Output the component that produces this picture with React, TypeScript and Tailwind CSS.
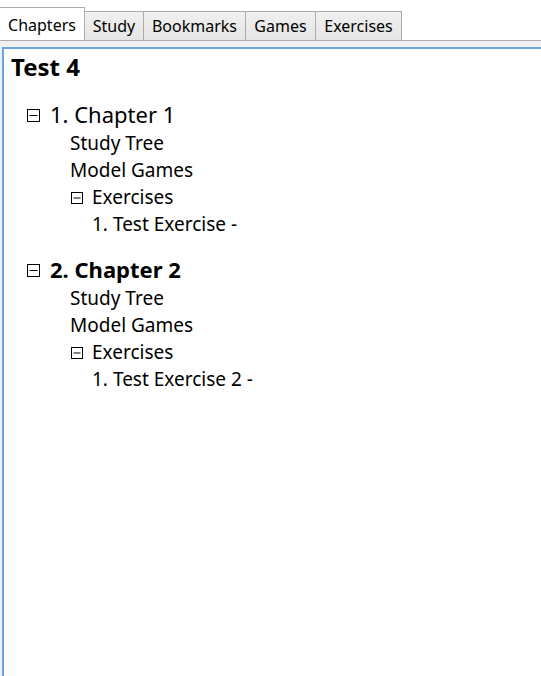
const tabs = [
  { label: 'Chapters', width: 'w-[85px]', selected: true },
  { label: 'Study', width: 'w-[59px]', selected: false },
  { label: 'Bookmarks', width: 'w-[102px]', selected: false },
  { label: 'Games', width: 'w-[70px]', selected: false },
  { label: 'Exercises', width: 'w-[86px]', selected: false },
];

const chapters = [
  { title: '1. Chapter 1', bold: false, exercises: ['1. Test Exercise -'] },
  { title: '2. Chapter 2', bold: true, exercises: ['1. Test Exercise 2 -'] },
];

function MinusBox({ size }: { size: number }) {
  return (
    <svg width={size} height={size} viewBox={`0 0 ${size} ${size}`} className="shrink-0">
      <rect x="0.5" y="0.5" width={size - 1} height={size - 1} fill="none" stroke="#000" strokeWidth="1" />
      <line x1="2.5" y1={size / 2} x2={size - 2.5} y2={size / 2} stroke="#000" strokeWidth="1" />
    </svg>
  );
}

export default function App() {
  return (
    <div className="w-[541px] h-[676px] bg-white flex flex-col overflow-hidden text-black font-['Noto_Sans',sans-serif]">
      {/* tab strip */}
      <div className="h-[40px] flex items-end shrink-0">
        {tabs.map((tab) =>
          tab.selected ? (
            <div
              key={tab.label}
              className={`${tab.width} h-[33px] bg-white border-t border-r border-[#acacac] flex items-center justify-center text-[16px] pt-[1px]`}
            >
              {tab.label}
            </div>
          ) : (
            <div
              key={tab.label}
              className={`${tab.width} h-[29px] bg-gradient-to-b from-[#f0f0f0] to-[#e5e5e5] border-t border-r border-[#acacac] flex items-center justify-center text-[16px]`}
            >
              {tab.label}
            </div>
          )
        )}
      </div>

      {/* content frame */}
      <div className="flex-1 flex flex-col border-t border-[#acacac] bg-[#f0f0f0] pt-[6px] pl-[2px]">
        <div className="flex-1 bg-white border-t-2 border-l-2 border-[#6aa5e4] pl-[7px] pt-[1px]">
          <div className="h-[33px] leading-[33px] text-[24px] font-bold">Test 4</div>

          {chapters.map((ch) => (
            <div key={ch.title} className="mt-[16px]">
              <div className="h-[31px] flex items-center">
                <div className="ml-[16px] mr-[10px] mt-[1px]">
                  <MinusBox size={13} />
                </div>
                <span className={`text-[22px] leading-[31px] ${ch.bold ? 'font-bold' : ''}`}>{ch.title}</span>
              </div>
              <div className="pl-[59px] text-[19px] leading-[27px]">
                <div>Study Tree</div>
                <div>Model Games</div>
                <div className="flex items-center">
                  <div className="ml-[1px] mr-[9px] mt-[1px]">
                    <MinusBox size={12} />
                  </div>
                  <span>Exercises</span>
                </div>
                {ch.exercises.map((ex) => (
                  <div key={ex} className="pl-[22px]">
                    {ex}
                  </div>
                ))}
              </div>
            </div>
          ))}
        </div>
      </div>
    </div>
  );
}
